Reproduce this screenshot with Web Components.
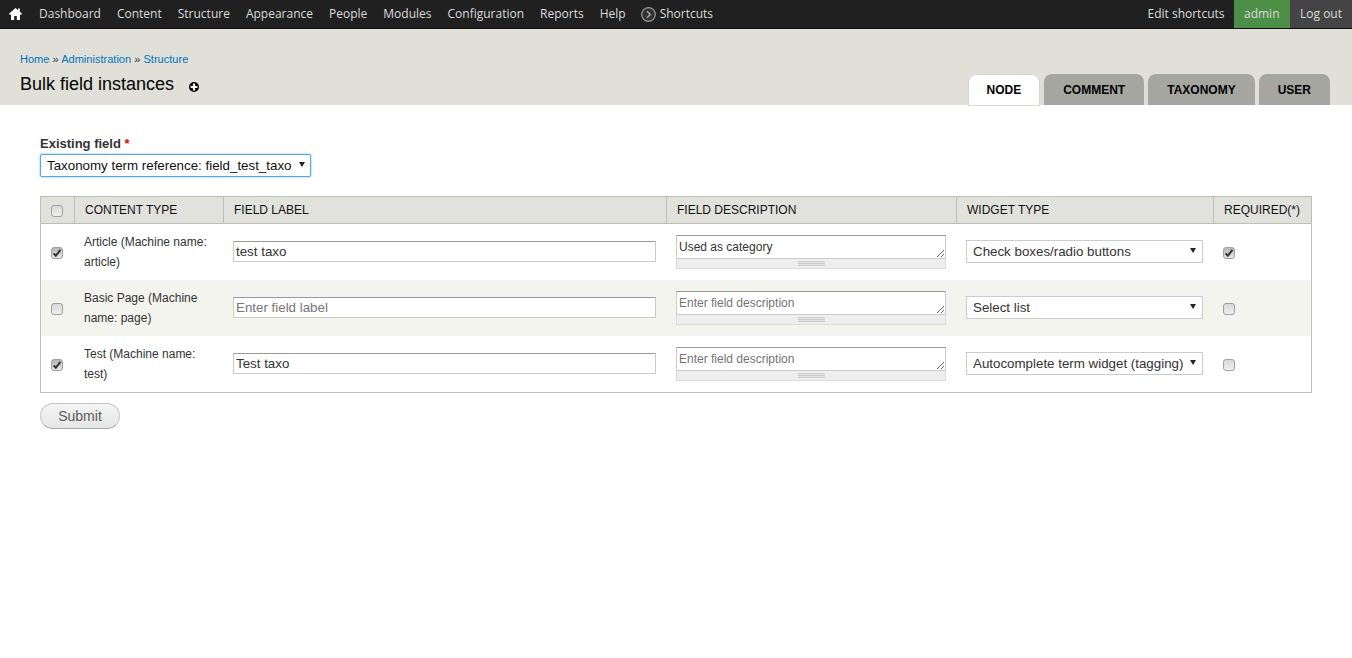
<!DOCTYPE html>
<html>
<head>
<meta charset="utf-8">
<title>Bulk field instances</title>
<style>
  html, body { margin: 0; padding: 0; background: #fff; }
  body { font: 13px/20px "Liberation Sans", Arial, sans-serif; color: #333; }
</style>
</head>
<body>
<admin-bar></admin-bar>
<page-header heading="Bulk field instances">
  <page-tab active>NODE</page-tab>
  <page-tab>COMMENT</page-tab>
  <page-tab>TAXONOMY</page-tab>
  <page-tab>USER</page-tab>
</page-header>
<bulk-form>
  <field-row name="Article (Machine name: article)" checked label="test taxo" desc="Used as category" widget="Check boxes/radio buttons" required></field-row>
  <field-row even name="Basic Page (Machine name: page)" widget="Select list"></field-row>
  <field-row name="Test (Machine name: test)" checked label="Test taxo" widget="Autocomplete term widget (tagging)"></field-row>
</bulk-form>

<script>
// top toolbar
class AdminBar extends HTMLElement {
  constructor() {
    super();
    const links = ["Dashboard", "Content", "Structure", "Appearance", "People", "Modules", "Configuration", "Reports", "Help"];
    this.attachShadow({ mode: "open" });
    this.shadowRoot.innerHTML = `
      <style>
        :host { display: flex; height: 28px; background: #202020; border-bottom: 1px solid #0f0f0f; font: 12px/27px "Open Sans", sans-serif; color: #e5e5e5; }
        a { color: #dcdcdc; padding: 0 8px; display: block; white-space: nowrap; }
        .home { padding: 0 9px 0 9px; display: flex; align-items: center; }
        nav { display: flex; }
        .shortcuts { display: flex; align-items: flex-start; padding: 0 0 0 7px; }
        .shortcuts svg { margin: 7px 4px 0 0; }
        .shortcuts a { padding: 0 8px 0 0; }
        .right { margin-left: auto; display: flex; }
        .right a { padding: 0 10px; }
        .right .edit { padding-right: 9px; }
        .right .user { background: #4c8f46; padding: 0 10.5px; }
        .logout { background: #444; }
      </style>
      <nav>
        <a class="home"><svg width="13" height="12" viewBox="0 0 13 12"><path fill="#fff" d="M6.5 0 L0 5.8 L1 7 L2 6.2 V12 H5.2 V8 H7.8 V12 H11 V6.2 L12 7 L13 5.8 L10.8 3.8 V0.6 H9 V2.2 Z"/></svg></a>
        ${links.map((l) => `<a>${l}</a>`).join("")}
        <div class="shortcuts">
          <svg width="15" height="15" viewBox="0 0 15 15"><circle cx="7.5" cy="7.5" r="6.8" fill="#333" stroke="#999" stroke-width="1.2"/><path d="M6 4.2 L9.3 7.5 L6 10.8" fill="none" stroke="#aaa" stroke-width="1.4"/></svg>
          <a>Shortcuts</a>
        </div>
      </nav>
      <div class="right">
        <a class="edit">Edit shortcuts</a>
        <a class="user">admin</a>
        <a class="logout">Log out</a>
      </div>`;
  }
}
customElements.define("admin-bar", AdminBar);

const headerTemplate = document.createElement("template");
headerTemplate.innerHTML = `
  <style>
    :host { display: flex; justify-content: space-between; align-items: flex-end; height: 76px; background: #e0e0d8; padding: 0 22px 0 20px; font-family: "Liberation Sans", Arial, sans-serif; }
    .crumbs { font-size: 11.05px; line-height: 16px; color: #333; margin-bottom: 4px; }
    .crumbs a { color: #0074bd; }
    .title { display: flex; align-items: center; margin-bottom: 8px; }
    h1 { margin: 0; font-size: 18px; line-height: 26px; font-weight: normal; color: #000; }
    svg { margin: 5px 0 0 15px; }
    .tabs { display: flex; gap: 4px; align-items: flex-end; }
  </style>
  <div>
    <div class="crumbs"><a>Home</a> » <a>Administration</a> » <a>Structure</a></div>
    <div class="title">
      <h1></h1>
      <svg width="10" height="10" viewBox="0 0 10 10"><circle cx="5" cy="5" r="5" fill="#000"/><path d="M5 1.6 V8.4 M1.6 5 H8.4" stroke="#fff" stroke-width="2.2"/></svg>
    </div>
  </div>
  <div class="tabs"><slot></slot></div>`;

class PageHeader extends HTMLElement {
  constructor() {
    super();
    this.attachShadow({ mode: "open" });
    this.shadowRoot.appendChild(headerTemplate.content.cloneNode(true));
    this.shadowRoot.querySelector("h1").innerText = this.getAttribute("heading");
  }
}
customElements.define("page-header", PageHeader);

class PageTab extends HTMLElement {
  constructor() {
    super();
    this.attachShadow({ mode: "open" });
    this.shadowRoot.innerHTML = `
      <style>
        :host { display: block; height: 31px; padding: 0 19px; background: #a6a6a0; border-radius: 8px 8px 0 0; font: bold 12px/33px "Liberation Sans", Arial, sans-serif; color: #000; }
        :host([active]) { height: 30px; line-height: 31px; background: #fff; padding: 0 18px; margin-right: 1px; box-shadow: 0 0 0 1px #d6d6ce; }
      </style>
      <slot></slot>`;
  }
}
customElements.define("page-tab", PageTab);

// square checkbox of the seven theme
const checkSvg = `<svg width="10" height="10" viewBox="0 0 10 10"><path d="M1.6 5.4 L3.8 7.8 L8.4 1.8" fill="none" stroke="#333" stroke-width="2"/></svg>`;
class CheckMark extends HTMLElement {
  constructor() {
    super();
    this.attachShadow({ mode: "open" });
    this.shadowRoot.innerHTML = `
      <style>
        :host { display: flex; align-items: center; justify-content: center; box-sizing: border-box; width: 12px; height: 12px; margin-top: 2px; border: 1px solid #a0a0a0; border-radius: 3px; background: linear-gradient(#d8d8d8, #eee); }
        :host([checked]) { background: linear-gradient(#b4b4b4, #e8e8e8); }
        svg { display: block; }
      </style>`;
  }
}
customElements.define("check-mark", CheckMark);

class SelectBox extends HTMLElement {
  constructor() {
    super();
    this.attachShadow({ mode: "open" });
    this.shadowRoot.innerHTML = `
      <style>
        :host { display: flex; align-items: center; justify-content: space-between; box-sizing: border-box; height: 23px; padding: 0 6px; border: 1px solid #ccc; background: #fff; font: 13.33px/20px "Liberation Sans", Arial, sans-serif; color: #333; white-space: nowrap; }
        :host([focused]) { padding-right: 5px; border-color: #59a8e6; border-radius: 2px; box-shadow: 0 0 2px #59a8e6; color: #222; }
        i { width: 0; height: 0; border: 3px solid transparent; border-top: 5px solid #222; border-bottom: 0; margin: -3px 0 0 0; }
      </style>
      <slot></slot><i></i>`;
  }
}
customElements.define("select-box", SelectBox);

const rowTemplate = document.createElement("template");
rowTemplate.innerHTML = `
  <style>
    :host { display: grid; grid-template-columns: var(--cols); height: 56px; font: 12px/20px "Liberation Sans", Arial, sans-serif; color: #333; }
    :host([even]) { background: #f3f4ee; }
    .cell { display: flex; align-items: center; padding: 0 10px; box-sizing: border-box; min-width: 0; }
    .name { line-height: 20px; padding-right: 12px; }
    input { box-sizing: border-box; width: 100%; height: 21px; margin: 0 0 1px; padding: 0 2px; border: 1px solid #ccc; border-top-color: #999; font: 13.33px "Liberation Sans", Arial, sans-serif; color: #333; background: #fff; outline: 0; }
    .notes > div { width: 100%; }
    textarea { display: block; box-sizing: border-box; width: 100%; height: 24px; margin: 0; padding: 4px 2px 0; border: 1px solid #ccc; border-top-color: #999; font: 12px/15px "Liberation Sans", Arial, sans-serif; color: #333; background: #fff; outline: 0; resize: vertical; overflow: hidden; }
    ::placeholder { color: #757575; opacity: 1; }
    .grip { box-sizing: border-box; height: 10px; background: #eee; border: 1px solid #ddd; border-top: 0; display: flex; justify-content: center; align-items: center; }
    .grip i { display: block; width: 27px; height: 5px; background: repeating-linear-gradient(#ccc 0 1px, #e4e4e4 1px 2px); }
    .widget { padding-bottom: 1px; }
    select-box { width: 100%; }
  </style>
  <div class="cell"><check-mark></check-mark></div>
  <div class="cell name"></div>
  <div class="cell"><input placeholder="Enter field label"></div>
  <div class="cell notes"><div><textarea placeholder="Enter field description"></textarea><div class="grip"><i></i></div></div></div>
  <div class="cell widget"><select-box></select-box></div>
  <div class="cell"><check-mark class="r"></check-mark></div>`;

class FieldRow extends HTMLElement {
  constructor() {
    super();
    this.attachShadow({ mode: "open" });
    this.shadowRoot.appendChild(rowTemplate.content.cloneNode(true));
    const root = this.shadowRoot;
    root.querySelector(".name").innerText = this.getAttribute("name");
    root.querySelector("input").value = this.getAttribute("label") || "";
    root.querySelector("textarea").value = this.getAttribute("desc") || "";
    root.querySelector("select-box").textContent = this.getAttribute("widget");
    if (this.hasAttribute("checked")) this.setMark(root.querySelector("check-mark"));
    if (this.hasAttribute("required")) this.setMark(root.querySelector(".r"));
  }
  setMark(el) {
    el.shadowRoot.innerHTML += checkSvg;
    el.setAttribute("checked", "");
  }
}
customElements.define("field-row", FieldRow);

const formTemplate = document.createElement("template");
formTemplate.innerHTML = `
  <style>
    :host { display: block; padding: 29px 40px 0; --cols: 33px 149px 443px 290px 257px 98px; font-family: "Liberation Sans", Arial, sans-serif; }
    label { display: block; font-size: 13px; line-height: 20px; font-weight: bold; color: #333; }
    label span { color: #e00; }
    .existing { display: inline-flex; margin-bottom: 19px; width: 271px; }
    .existing select-box { width: 100%; color: #111; }
    .table { border: 1px solid #bebfb9; }
    .head { display: grid; grid-template-columns: var(--cols); height: 26px; background: #e1e2dc; border-bottom: 1px solid #bebfb9; font-size: 12px; line-height: 26px; color: #111; }
    .head div { border-left: 1px solid #bebfb9; padding-left: 10px; box-sizing: border-box; white-space: nowrap; }
    .head div:first-child { border-left: 0; display: flex; align-items: center; }
    .submit { display: inline-block; margin-top: 10px; box-sizing: border-box; width: 80px; height: 26px; border: 1px solid #c5c5c5; border-bottom-color: #a8a8a8; border-radius: 13px; background: linear-gradient(#f4f4f4, #e6e6e6); font-size: 14px; line-height: 24px; color: #5a5a5a; text-align: center; }
  </style>
  <label>Existing field <span>*</span></label>
  <div class="existing"><select-box focused>Taxonomy term reference: field_test_taxo</select-box></div>
  <div class="table">
    <div class="head">
      <div><check-mark></check-mark></div>
      <div>CONTENT TYPE</div>
      <div>FIELD LABEL</div>
      <div>FIELD DESCRIPTION</div>
      <div>WIDGET TYPE</div>
      <div>REQUIRED(*)</div>
    </div>
    <slot></slot>
  </div>
  <div class="submit">Submit</div>`;

class BulkForm extends HTMLElement {
  constructor() {
    super();
    this.attachShadow({ mode: "open" });
    this.shadowRoot.appendChild(formTemplate.content.cloneNode(true));
  }
}
customElements.define("bulk-form", BulkForm);
</script>
</body>
</html>
